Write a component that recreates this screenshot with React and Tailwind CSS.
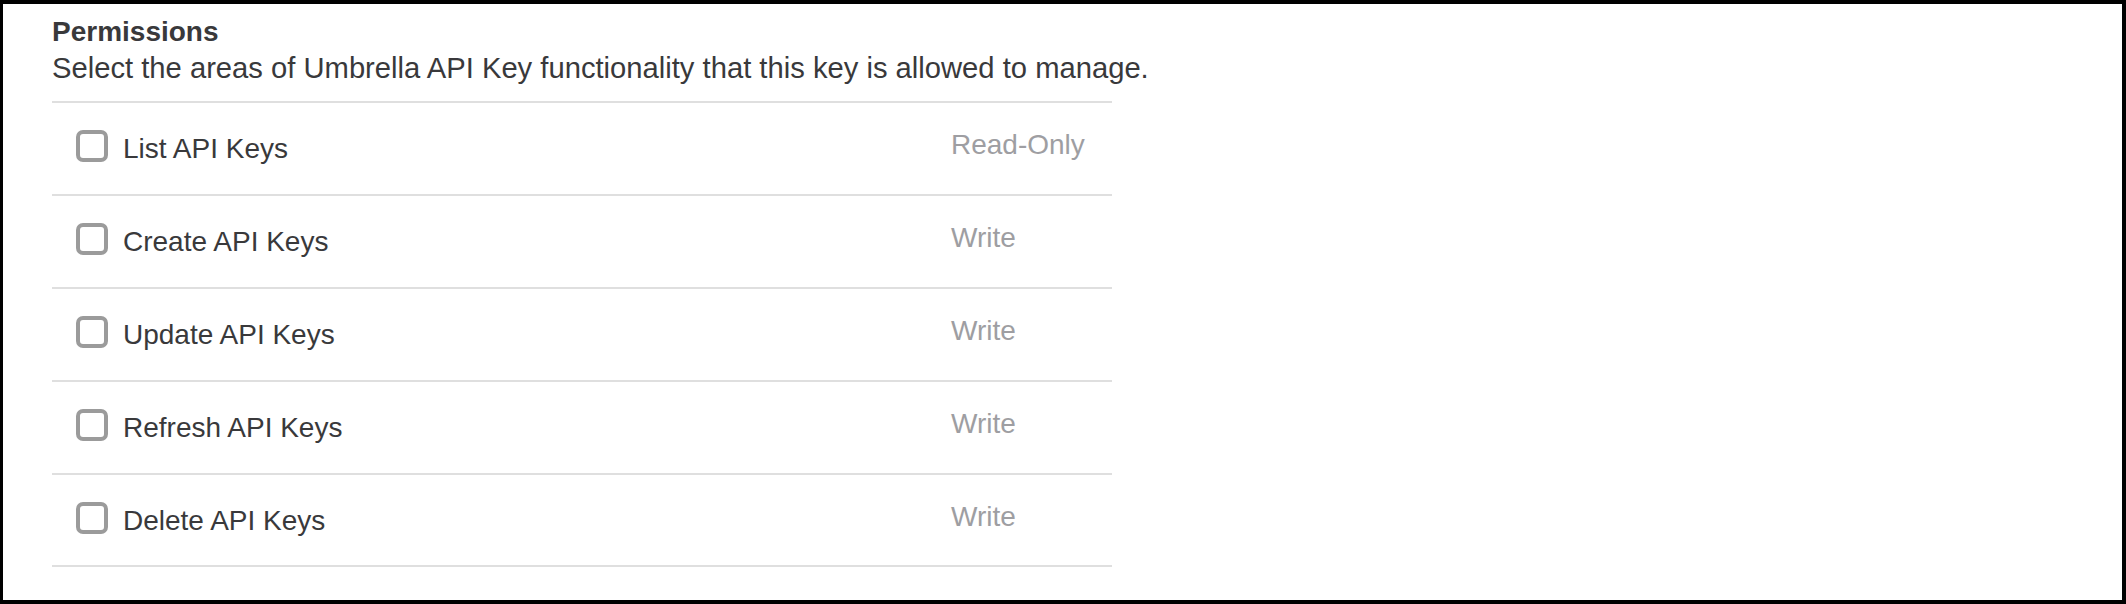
import React from "react";

const rows = [
  { label: "List API Keys", access: "Read-Only" },
  { label: "Create API Keys", access: "Write" },
  { label: "Update API Keys", access: "Write" },
  { label: "Refresh API Keys", access: "Write" },
  { label: "Delete API Keys", access: "Write" },
];

export default function App() {
  return (
    <div
      className="w-[2126px] h-[604px] bg-white border-black border-t-4 border-r-4 border-b-4 border-l-[3px] pl-[49px] pt-[10px] overflow-hidden"
      style={{ fontFamily: '"Liberation Sans", Arial, sans-serif' }}
    >
      <div className="text-[28px] leading-[35px] font-bold text-[#39393b]">Permissions</div>
      <div className="mt-[1px] text-[29.2px] leading-[36px] text-[#39393b]">
        Select the areas of Umbrella API Key functionality that this key is allowed to manage.
      </div>
      <div className="mt-[15px] w-[1060px] border-t-2 border-[#dfdfdf]">
        {rows.map((r) => (
          <div
            key={r.label}
            className="h-[92.9px] border-b-2 border-[#dfdfdf] flex items-center"
          >
            <div className="ml-[24px] mb-[4px] w-[32px] h-[32px] rounded-[7px] border-4 border-[#9b9b9b] bg-white shrink-0" />
            <div className="ml-[15px] mt-[2px] flex-1 text-[28px] leading-[34px] text-[#39393b]">{r.label}</div>
            <div className="w-[161px] mb-[6px] text-[28px] leading-[34px] text-[#9e9ea2]">{r.access}</div>
          </div>
        ))}
      </div>
    </div>
  );
}
